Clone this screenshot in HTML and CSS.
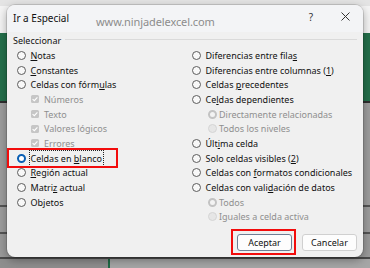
FILE: index.html
```html
<!DOCTYPE html>
<html lang="es">
<head>
<meta charset="utf-8">
<title>Ir a Especial</title>
<link rel="stylesheet" href="styles.css">
</head>
<body>
<div class="bg">
  <div class="bg-top"></div>
  <div class="bg-light"></div>
  <div class="bg-green"></div>
  <div class="bg-dark"></div>
  <div class="bg-grey"></div>
  <div class="bg-line"></div>
  <div class="bg-grey2"></div>
  <div class="bg-line"></div>
  <div class="bg-grey3"></div>
  <div class="bg-bottomline"></div>
  <div class="bg-foot"><div class="foot-left"></div><div class="foot-green"></div><div class="foot-right"></div></div>
</div>

<div class="dialog">
  <div class="titlebar">
    <span class="title">Ir a Especial</span>
    <span class="watermark">www.ninjadelexcel.com</span>
    <span class="help">?</span>
    <svg class="close" width="9" height="9" viewBox="0 0 9 9"><path d="M0.5 0.5L8.5 8.5M8.5 0.5L0.5 8.5" stroke="#333" stroke-width="1" fill="none"/></svg>
  </div>
  <div class="content">
    <div class="group-label"><span>Seleccionar</span><div class="group-line"></div></div>
    <div class="cols">
      <div class="col col-left">
        <div class="row"><span class="radio"></span><span><u>N</u>otas</span></div>
        <div class="row"><span class="radio"></span><span><u>C</u>onstantes</span></div>
        <div class="row"><span class="radio"></span><span>Celdas con fórm<u>u</u>las</span></div>
        <div class="row sub dis"><span class="check"><svg width="8" height="8" viewBox="0 0 8 8"><path d="M1.6 4.1L3.3 5.7L6.4 2.4" stroke="#fff" stroke-width="1.1" fill="none"/></svg></span><span>Números</span></div>
        <div class="row sub dis"><span class="check"><svg width="8" height="8" viewBox="0 0 8 8"><path d="M1.6 4.1L3.3 5.7L6.4 2.4" stroke="#fff" stroke-width="1.1" fill="none"/></svg></span><span>Texto</span></div>
        <div class="row sub dis"><span class="check"><svg width="8" height="8" viewBox="0 0 8 8"><path d="M1.6 4.1L3.3 5.7L6.4 2.4" stroke="#fff" stroke-width="1.1" fill="none"/></svg></span><span>Valores lógicos</span></div>
        <div class="row sub dis"><span class="check"><svg width="8" height="8" viewBox="0 0 8 8"><path d="M1.6 4.1L3.3 5.7L6.4 2.4" stroke="#fff" stroke-width="1.1" fill="none"/></svg></span><span>Errores</span></div>
        <div class="row highlighted"><span class="radio on"></span><span class="focus">Celdas en <u>b</u>lanco</span><span class="redbox redbox-left"></span></div>
        <div class="row"><span class="radio"></span><span><u>R</u>egión actual</span></div>
        <div class="row"><span class="radio"></span><span>Matri<u>z</u> actual</span></div>
        <div class="row"><span class="radio"></span><span>Objetos</span></div>
      </div>
      <div class="col col-right">
        <div class="row"><span class="radio"></span><span>Diferencias entre fila<u>s</u></span></div>
        <div class="row"><span class="radio"></span><span>Diferencias entre columnas (<u>1</u>)</span></div>
        <div class="row"><span class="radio"></span><span>Celdas <u>p</u>recedentes</span></div>
        <div class="row"><span class="radio"></span><span>Ce<u>l</u>das dependientes</span></div>
        <div class="row rsub dis"><span class="radio dis-on"></span><span>Directamente relacionadas</span></div>
        <div class="row rsub dis"><span class="radio dis-off"></span><span>Todos los niveles</span></div>
        <div class="row"><span class="radio"></span><span>Últ<u>i</u>ma celda</span></div>
        <div class="row"><span class="radio"></span><span>Solo celdas visibles (<u>2</u>)</span></div>
        <div class="row"><span class="radio"></span><span>Celdas con <u>f</u>ormatos condicionales</span></div>
        <div class="row"><span class="radio"></span><span>Celdas con vali<u>d</u>ación de datos</span></div>
        <div class="row rsub dis"><span class="radio dis-on"></span><span>Todos</span></div>
        <div class="row rsub dis"><span class="radio dis-off"></span><span>Iguales a celda activa</span></div>
      </div>
    </div>
    <div class="buttons">
      <div class="btn-wrap"><button class="btn default">Aceptar</button><span class="redbox redbox-btn"></span></div>
      <button class="btn">Cancelar</button>
    </div>
  </div>
</div>
</body>
</html>
```
FILE: styles.css
```css
html, body {
  margin: 0;
  padding: 0;
}
body {
  width: 370px;
  height: 268px;
  overflow: hidden;
  position: relative;
  font-family: "Noto Sans", "Open Sans", sans-serif;
  background: #9a9a9a;
}
.bg { display: flex; flex-direction: column; width: 370px; height: 268px; }
.bg-top { height: 6px; background: #e4e4e4; }
.bg-light { height: 27px; background: #f4f4f4; }
.bg-green { height: 68px; background: #24704b; }
.bg-dark { height: 2px; background: #2e2e2e; }
.bg-grey { height: 102px; background: #9d9d9d; }
.bg-line { height: 2px; background: #555; }
.bg-grey2 { height: 25px; background: #9d9d9d; }
.bg-grey3 { height: 23px; background: #9a9a9a; }
.bg-bottomline { height: 2px; background: #4a4a4a; }
.bg-foot { flex: 1; display: flex; }
.foot-left { width: 108px; background: #8e8e8e; }
.foot-green { width: 2px; background: #1f6a45; }
.foot-right { flex: 1; background: #a6a6a6; }

.dialog {
  position: absolute;
  left: 7px;
  top: 5px;
  width: 356px;
  height: 252px;
  box-sizing: border-box;
  border-radius: 8px;
  background: #f0f0f0;
  box-shadow: 0 0 0 1px rgba(0,0,0,0.12), 0 3px 10px rgba(0,0,0,0.35);
  overflow: hidden;
  display: flex;
  flex-direction: column;
  color: #111;
}
.titlebar {
  height: 27px;
  flex: none;
  background: #f3f4f6;
  display: flex;
  align-items: center;
  padding-left: 6px;
  padding-right: 13px;
}
.title { font-size: 10px; margin-top: -2px; }
.watermark { font-size: 11px; color: #8c8c8c; margin-left: 27px; margin-top: 5px; letter-spacing: -0.1px; }
.help { font-size: 10px; margin-left: auto; margin-top: -3px; color: #333; }
.close { margin-left: 28px; margin-top: -4px; }

.content {
  flex: 1;
  display: flex;
  flex-direction: column;
  padding: 0 6px 6px 6px;
}
.group-label {
  display: flex;
  align-items: center;
  height: 16px;
  padding-top: 1px;
  box-sizing: border-box;
  font-size: 9px;
}
.group-line { flex: 1; height: 1px; background: #dadada; margin-left: 4px; margin-top: -2px; }

.cols { display: flex; padding-left: 4px; }
.col { display: flex; flex-direction: column; }
.col-left { width: 175px; }
.row {
  height: 14.7px;
  display: flex;
  align-items: center;
  font-size: 9px;
  white-space: nowrap;
  position: relative;
}
.row u { text-decoration-thickness: 1px; text-underline-offset: 1px; }
.radio {
  width: 9px;
  height: 9px;
  box-sizing: border-box;
  border-radius: 50%;
  border: 1px solid #5c5c5c;
  background: #f8f8f8;
  margin-right: 4.5px;
  flex: none;
}
.radio.on {
  border: 2.5px solid #0a5fb4;
  background: #fff;
}
.radio.dis-on {
  border: 2.5px solid #c3c3c3;
  background: #f3f3f3;
}
.radio.dis-off {
  border: 1px solid #d5d5d5;
  background: #e6e6e6;
}
.sub { padding-left: 14px; }
.rsub { padding-left: 16px; }
.rsub .radio { margin-right: 2px; }
.check {
  width: 8px;
  height: 8px;
  border-radius: 1.5px;
  background: #c6c6c6;
  margin-right: 5px;
  display: flex;
  flex: none;
}
.dis { color: #8f8f8f; }
.focus { outline: 1px dotted #222; outline-offset: 0; padding: 1px 1px; margin-left: -1px; }
.redbox {
  position: absolute;
  border: 2px solid #f20c0c;
  box-sizing: border-box;
  pointer-events: none;
}
.redbox-left { left: -10px; top: -3px; width: 111px; height: 20px; }

.buttons {
  margin-top: auto;
  display: flex;
  justify-content: flex-end;
  gap: 10px;
}
.btn-wrap { position: relative; display: flex; }
.btn {
  width: 55px;
  height: 17px;
  box-sizing: border-box;
  border-radius: 3px;
  border: 1px solid #d0d0d0;
  background: #fdfdfd;
  font-family: "Noto Sans", "Open Sans", sans-serif;
  font-size: 9px;
  color: #111;
  padding: 0;
}
.btn.default { border-color: #6f7f95; }
.redbox-btn { left: -6px; top: -5px; width: 65px; height: 26px; }
```
